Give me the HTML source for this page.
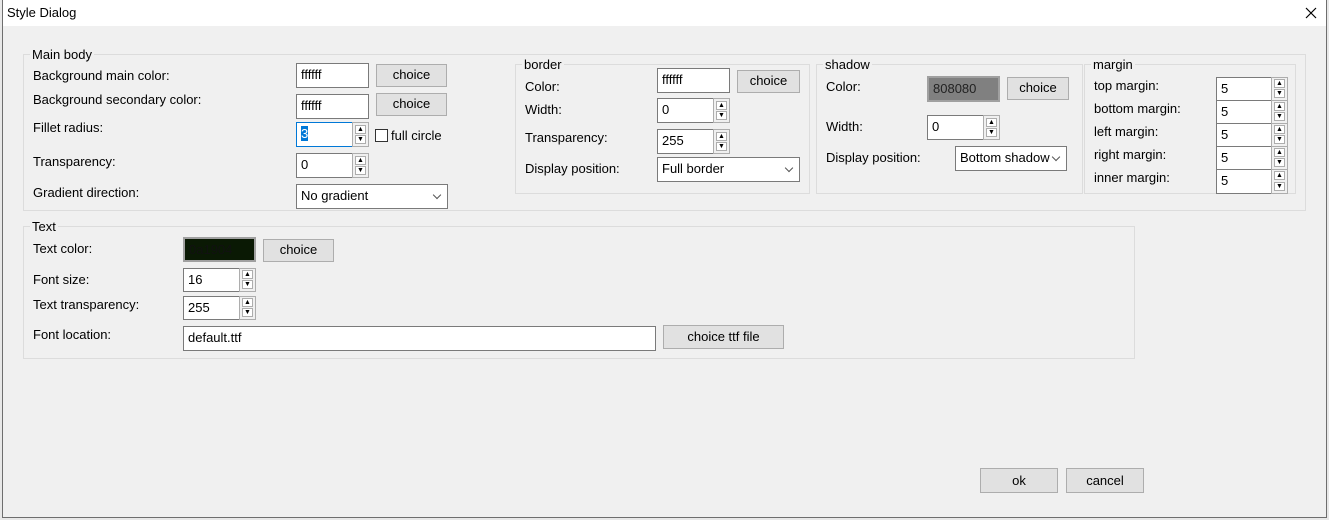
<!DOCTYPE html>
<html><head><meta charset="utf-8"><style>
*{box-sizing:border-box;margin:0;padding:0}
body{width:1329px;height:520px;position:relative;background:#e8e8e8;font-family:"Liberation Sans","Noto Sans CJK SC",sans-serif;font-size:13px;color:#000;overflow:hidden}
.win{position:absolute;left:2px;top:0;width:1325px;height:518px;background:#f0f0f0;border:1px solid #6e6e6e;border-top:none}
.title{position:absolute;left:0;top:0;width:1323px;height:26px;background:#fff}
.a{position:absolute}
.t{position:absolute;white-space:nowrap;line-height:16px}
.g{position:absolute;border:1px solid #dcdcdc}
.gl{position:absolute;background:#f0f0f0;padding:0 2px;line-height:14px;white-space:nowrap}
.in{position:absolute;background:#fff;border:1px solid #7a7a7a;padding-left:4px;line-height:22px;white-space:nowrap;overflow:hidden}
.btn{position:absolute;background:#e1e1e1;border:1px solid #adadad;text-align:center;line-height:20px}
.sp{position:absolute;background:#fff;border:1px solid #7a7a7a;padding-left:4px;line-height:22px}
.sp .ar{position:absolute;right:-1px;top:-1px;width:17px;bottom:-1px;background:#f0f0f0;border:1px solid #adadad}
.sp .ar i{position:absolute;left:2px;width:11px;height:9px;background:#fff;border:1px solid #adadad;font-style:normal;font-size:7px;line-height:8px;text-align:center}
.sel{position:absolute;background:#fff;border:1px solid #7a7a7a;padding-left:4px;line-height:22px;white-space:nowrap;overflow:hidden}
.sel:after{content:"";position:absolute;right:7px;top:7px;width:5px;height:5px;border-right:1px solid #555;border-bottom:1px solid #555;transform:rotate(45deg)}
</style></head><body>
<div class="win">
<div class="title"></div>
</div>
<div class="t" style="left:7px;top:5px">Style Dialog</div>
<svg class="a" style="left:1305px;top:7px" width="12" height="12"><path d="M1 1L11 11M11 1L1 11" stroke="#000" stroke-width="1.2"/></svg>

<!-- Main body -->
<div class="g" style="left:23px;top:54px;width:1283px;height:157px"></div>
<div class="gl" style="left:30px;top:48px">Main body</div>
<div class="t" style="left:33px;top:68px">Background main color:</div>
<div class="in" style="left:296px;top:63px;width:73px;height:25px">ffffff</div>
<div class="btn" style="left:376px;top:64px;width:71px;height:23px">choice</div>
<div class="t" style="left:33px;top:92px">Background secondary color:</div>
<div class="in" style="left:296px;top:94px;width:73px;height:25px">ffffff</div>
<div class="btn" style="left:376px;top:93px;width:71px;height:23px">choice</div>
<div class="t" style="left:33px;top:120px">Fillet radius:</div>
<div class="sp" style="left:296px;top:122px;width:73px;height:25px;border-color:#0078d7"><span style="background:#0078d7;color:#fff">3</span><div class="ar"><i style="top:2px">▲</i><i style="top:12px">▼</i></div></div>
<div class="a" style="left:375px;top:129px;width:13px;height:13px;border:1px solid #333;background:#fff"></div>
<div class="t" style="left:391px;top:128px">full circle</div>
<div class="t" style="left:33px;top:154px">Transparency:</div>
<div class="sp" style="left:296px;top:153px;width:73px;height:25px">0<div class="ar"><i style="top:2px">▲</i><i style="top:12px">▼</i></div></div>
<div class="t" style="left:33px;top:185px">Gradient direction:</div>
<div class="sel" style="left:296px;top:184px;width:152px;height:25px">No gradient</div>

<!-- border -->
<div class="g" style="left:515px;top:64px;width:295px;height:130px"></div>
<div class="gl" style="left:522px;top:58px">border</div>
<div class="t" style="left:525px;top:79px">Color:</div>
<div class="in" style="left:657px;top:68px;width:73px;height:25px">ffffff</div>
<div class="btn" style="left:737px;top:70px;width:63px;height:23px">choice</div>
<div class="t" style="left:525px;top:102px">Width:</div>
<div class="sp" style="left:657px;top:98px;width:73px;height:25px">0<div class="ar"><i style="top:2px">▲</i><i style="top:12px">▼</i></div></div>
<div class="t" style="left:525px;top:130px">Transparency:</div>
<div class="sp" style="left:657px;top:129px;width:73px;height:25px">255<div class="ar"><i style="top:2px">▲</i><i style="top:12px">▼</i></div></div>
<div class="t" style="left:525px;top:161px">Display position:</div>
<div class="sel" style="left:657px;top:157px;width:143px;height:25px">Full border</div>

<!-- shadow -->
<div class="g" style="left:816px;top:64px;width:267px;height:130px"></div>
<div class="gl" style="left:823px;top:58px">shadow</div>
<div class="t" style="left:826px;top:79px">Color:</div>
<div class="in" style="left:927px;top:76px;width:73px;height:26px;background:#808080;border:2px solid #a0a0a0;color:#222">808080</div>
<div class="btn" style="left:1007px;top:77px;width:62px;height:23px">choice</div>
<div class="t" style="left:826px;top:119px">Width:</div>
<div class="sp" style="left:927px;top:115px;width:73px;height:25px">0<div class="ar"><i style="top:2px">▲</i><i style="top:12px">▼</i></div></div>
<div class="t" style="left:826px;top:150px">Display position:</div>
<div class="sel" style="left:955px;top:146px;width:112px;height:25px;padding-right:18px">Bottom shadow</div>

<!-- margin -->
<div class="g" style="left:1084px;top:64px;width:212px;height:130px"></div>
<div class="gl" style="left:1091px;top:58px">margin</div>
<div class="t" style="left:1094px;top:78px">top margin:</div>
<div class="t" style="left:1094px;top:101px">bottom margin:</div>
<div class="t" style="left:1094px;top:124px">left margin:</div>
<div class="t" style="left:1094px;top:147px">right margin:</div>
<div class="t" style="left:1094px;top:170px">inner margin:</div>
<div class="sp" style="left:1216px;top:77px;width:72px;height:24px">5<div class="ar"><i style="top:1px">▲</i><i style="top:11px">▼</i></div></div>
<div class="sp" style="left:1216px;top:100px;width:72px;height:24px">5<div class="ar"><i style="top:1px">▲</i><i style="top:11px">▼</i></div></div>
<div class="sp" style="left:1216px;top:123px;width:72px;height:24px">5<div class="ar"><i style="top:1px">▲</i><i style="top:11px">▼</i></div></div>
<div class="sp" style="left:1216px;top:146px;width:72px;height:24px">5<div class="ar"><i style="top:1px">▲</i><i style="top:11px">▼</i></div></div>
<div class="sp" style="left:1216px;top:169px;width:72px;height:25px">5<div class="ar"><i style="top:1px">▲</i><i style="top:12px">▼</i></div></div>

<!-- Text -->
<div class="g" style="left:23px;top:226px;width:1112px;height:133px"></div>
<div class="gl" style="left:30px;top:220px">Text</div>
<div class="t" style="left:33px;top:241px">Text color:</div>
<div class="in" style="left:183px;top:237px;width:73px;height:25px;background:#0a1904;border:2px solid #a0a0a0;color:#111">0a1904</div>
<div class="btn" style="left:263px;top:239px;width:71px;height:23px">choice</div>
<div class="t" style="left:33px;top:272px">Font size:</div>
<div class="sp" style="left:183px;top:268px;width:73px;height:24px">16<div class="ar"><i style="top:1px">▲</i><i style="top:11px">▼</i></div></div>
<div class="t" style="left:33px;top:297px">Text transparency:</div>
<div class="sp" style="left:183px;top:296px;width:73px;height:24px">255<div class="ar"><i style="top:1px">▲</i><i style="top:11px">▼</i></div></div>
<div class="t" style="left:33px;top:327px">Font location:</div>
<div class="in" style="left:183px;top:326px;width:473px;height:25px">default.ttf</div>
<div class="btn" style="left:663px;top:325px;width:121px;height:24px;line-height:22px">choice ttf file</div>

<div class="btn" style="left:980px;top:468px;width:78px;height:25px;line-height:23px">ok</div>
<div class="btn" style="left:1066px;top:468px;width:78px;height:25px;line-height:23px">cancel</div>
</body></html>
